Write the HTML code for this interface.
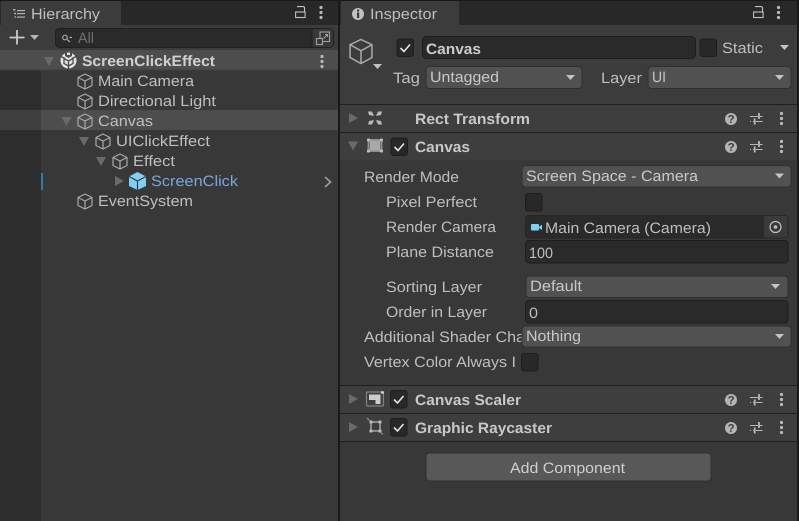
<!DOCTYPE html>
<html><head><meta charset="utf-8"><style>
html,body{margin:0;padding:0;background:#191919;width:799px;height:521px;overflow:hidden}
svg{display:block}
text{font-family:"Liberation Sans",sans-serif;font-size:15px;fill:#bebebe;text-rendering:geometricPrecision}
.b{font-weight:bold;fill:#c8c8c8}
</style></head><body>
<svg width="799" height="521" viewBox="0 0 799 521" xmlns="http://www.w3.org/2000/svg">
<defs>
<g id="cube" fill="none" stroke="#aaaaaa" stroke-width="1.200" stroke-linejoin="round"><path d="M8 1 L15 4.500 V12.500 L8 16 L1 12.500 V4.500 Z M1 4.500 L8 8 L15 4.500 M8 8 V16"/></g>
<g id="kb"><rect x="0" y="0" width="16.500" height="17.500" rx="2.500" fill="#282828" stroke="#1e1e1e"/></g>
<g id="chk"><use href="#kb"/><path d="M3.500 9 L7 12.500 L13 5.500" fill="none" stroke="#e4e4e4" stroke-width="1.600"/></g>
<g id="dots" fill="#b8b8b8"><circle cx="1.500" cy="1.500" r="1.600"/><circle cx="1.500" cy="6.500" r="1.600"/><circle cx="1.500" cy="11.500" r="1.600"/></g>
<g id="lock" fill="none" stroke="#c0c0c0" stroke-width="1.100"><rect x="0.600" y="6" width="9.500" height="5.500"/><path d="M2 0.600 H8 Q9.500 0.600 9.500 2 V6"/></g>
<g id="help"><circle cx="6" cy="6" r="6" fill="#b4b4b4"/><text x="2.600" y="10.200" style="font-size:11.500px;font-weight:bold;fill:#3e3e3e">?</text></g>
<g id="sl" stroke="#b8b8b8" stroke-width="1.100" fill="none"><path d="M0 3.500 H8 M10 3.500 H12.500 M0 8.500 H1 M3 8.500 H4 M6 8.500 H12.500"/><path d="M9 0 V6 M4.700 5.500 V11.500" stroke-width="1.800"/></g>
<g id="tl" fill="#6a6a6a"><path d="M0 0 L9 5 L0 10 Z"/></g>
<g id="td" fill="#6a6a6a"><path d="M0 0 H10 L5 9 Z"/></g>
<g id="dd" fill="#c4c4c4"><path d="M0 0 H9 L4.500 5 Z"/></g>
</defs>

<rect width="799" height="521" fill="#191919"/>
<!-- hierarchy panel -->
<rect x="0" y="1" width="338" height="24" fill="#282828"/>
<path d="M1 25 V3 Q1 1 3 1 H119 Q121 1 121 3 V25 Z" fill="#3c3c3c"/>
<rect x="0" y="25" width="338" height="25" fill="#3c3c3c"/>
<rect x="0" y="50" width="338" height="471" fill="#383838"/>
<rect x="0" y="50" width="41" height="471" fill="#2d2d2d"/>
<rect x="0" y="50" width="338" height="20" fill="#4d4d4d"/>
<rect x="0" y="69.500" width="338" height="1" fill="#3f3f3f"/>
<rect x="0" y="110" width="41" height="20" fill="#3f3f3f"/>
<rect x="41" y="110" width="297" height="20" fill="#4d4d4d"/>
<rect x="41" y="173" width="2" height="17" fill="#2a7fae"/>

<!-- tab icon -->
<g fill="#b4b4b4"><rect x="17" y="10" width="8" height="1.200"/><rect x="17" y="13" width="8" height="1.200"/><rect x="17" y="16.500" width="8" height="1.200"/><rect x="13" y="9" width="2.500" height="1.400"/><rect x="14" y="12.800" width="2" height="1.400"/><rect x="14.500" y="16.300" width="1.500" height="1.300"/></g>
<text x="31" y="19" textLength="69" lengthAdjust="spacingAndGlyphs">Hierarchy</text>
<use href="#lock" x="295" y="6"/>
<use href="#dots" x="319.500" y="6"/>

<!-- toolbar -->
<path d="M17 30 V44.500 M9.500 37.500 H24.500" stroke="#c8c8c8" stroke-width="1.800"/>
<path d="M30 35 H39 L34.500 40 Z" fill="#b4b4b4"/>
<rect x="55.500" y="28.500" width="278" height="19" rx="4" fill="#2a2a2a" stroke="#202020"/>
<rect x="312" y="29" width="21" height="18" rx="3" fill="#383838"/>
<path d="M312 29 V47" stroke="#202020"/>
<circle cx="65" cy="37.500" r="2.300" fill="none" stroke="#a8a8a8" stroke-width="1.200"/><path d="M67 39.500 L70 42 M69.500 37.500 H72" stroke="#a8a8a8" stroke-width="1.200"/>
<text x="78" y="43" textLength="16" lengthAdjust="spacingAndGlyphs" style="fill:#6f6f6f">All</text>
<rect x="320" y="32" width="9.500" height="9.500" fill="none" stroke="#a0a0a0" stroke-width="1.100"/>
<rect x="316.500" y="38.500" width="6" height="6" fill="#383838" stroke="#a0a0a0" stroke-width="1.100"/>
<path d="M323.500 38.500 L327.500 34.500 M325 34.500 H327.500 V37" stroke="#a0a0a0" fill="none"/>

<!-- hierarchy rows -->
<use href="#td" x="44" y="57"/>
<circle cx="68.500" cy="60.500" r="8" fill="#e4e4e4"/>
<path d="M60 56 L65 58.500 M77 56 L72 58.500 M68.500 66 V69" stroke="#4d4d4d" stroke-width="1.500" fill="none"/>
<path d="M64 58.500 L68.500 61 L73 58.500 M68.500 61 V66 M64 58.500 V63.500 L68.500 66 L73 63.500 V58.500" stroke="#4d4d4d" stroke-width="1.300" fill="none"/>
<path d="M65 52 H67 V55 H70 V52 H72 V56 L68.500 58 L65 56 Z" fill="#4d4d4d"/>
<text class="b" x="82" y="66" textLength="133" lengthAdjust="spacingAndGlyphs" style="fill:#d0d0d0">ScreenClickEffect</text>
<use href="#dots" x="320.500" y="55"/>

<use href="#cube" x="77" y="73"/>
<text x="98" y="86" textLength="96" lengthAdjust="spacingAndGlyphs">Main Camera</text>
<use href="#cube" x="77" y="93"/>
<text x="98" y="106" textLength="118" lengthAdjust="spacingAndGlyphs">Directional Light</text>
<use href="#td" x="61.500" y="117"/>
<use href="#cube" x="77" y="113"/>
<text x="98" y="126" textLength="55" lengthAdjust="spacingAndGlyphs">Canvas</text>
<use href="#td" x="79" y="137"/>
<use href="#cube" x="95" y="133"/>
<text x="116" y="146" textLength="94" lengthAdjust="spacingAndGlyphs">UIClickEffect</text>
<use href="#td" x="96" y="157"/>
<use href="#cube" x="112" y="153"/>
<text x="133" y="166" textLength="42" lengthAdjust="spacingAndGlyphs">Effect</text>
<use href="#tl" x="115" y="176"/>
<path d="M137.500 172 L146 176.500 V186 L137.500 190 L129 186 V176.500 Z" fill="#7fd0f5"/>
<path d="M129 176.500 L137.500 181 L146 176.500 M137.500 181 V190" stroke="#383838" stroke-width="1.200" fill="none"/>
<text x="151" y="186" textLength="87" lengthAdjust="spacingAndGlyphs" style="fill:#7ba4dd">ScreenClick</text>
<path d="M325 177 L330.500 182 L325 187" fill="none" stroke="#989898" stroke-width="1.800"/>
<use href="#cube" x="77" y="193"/>
<text x="98" y="206" textLength="95" lengthAdjust="spacingAndGlyphs">EventSystem</text>

<!-- inspector panel -->
<rect x="340" y="1" width="457" height="24" fill="#282828"/>
<path d="M341 25 V3 Q341 1 343 1 H457 Q459 1 459 3 V25 Z" fill="#3c3c3c"/>
<rect x="340" y="25" width="457" height="496" fill="#383838"/>
<rect x="340" y="25" width="457" height="79" fill="#3c3c3c"/>
<circle cx="358" cy="14" r="6" fill="#c0c0c0"/><rect x="357" y="12.500" width="2.200" height="5.500" fill="#3c3c3c"/><rect x="357" y="9.500" width="2.200" height="2" fill="#3c3c3c"/>
<text x="370" y="19" textLength="67" lengthAdjust="spacingAndGlyphs">Inspector</text>
<use href="#lock" x="753" y="6"/>
<use href="#dots" x="777" y="6"/>

<g transform="translate(349,38) scale(1.500)"><path d="M8 1 L15.300 4.500 V13 L8 17 L.7 13 V4.500 Z M.7 4.500 L8 8.500 L15.300 4.500 M8 8.500 V17" fill="none" stroke="#aaaaaa" stroke-width="1"/></g>
<path d="M373 64 H382 L377.500 69 Z" fill="#c4c4c4"/>
<use href="#chk" x="397" y="39"/>
<rect x="422.500" y="36.500" width="273" height="22" rx="4" fill="#2a2a2a" stroke="#1e1e1e"/>
<text class="b" x="426" y="54" textLength="55" lengthAdjust="spacingAndGlyphs" style="fill:#cccccc">Canvas</text>
<use href="#kb" x="700" y="39"/>
<text x="722" y="53" textLength="41" lengthAdjust="spacingAndGlyphs">Static</text>
<path d="M780 45 H789 L784.500 50 Z" fill="#c4c4c4"/>
<text x="393" y="83" textLength="27" lengthAdjust="spacingAndGlyphs">Tag</text>
<rect x="426" y="66.500" width="156" height="22" rx="3.500" fill="#515151" stroke="#303030"/>
<text x="430" y="82" textLength="69" lengthAdjust="spacingAndGlyphs" style="fill:#c8c8c8">Untagged</text>
<use href="#dd" x="566" y="75"/>
<text x="601" y="83" textLength="41" lengthAdjust="spacingAndGlyphs">Layer</text>
<rect x="648" y="66.500" width="143" height="22" rx="3.500" fill="#515151" stroke="#303030"/>
<text x="652" y="82" textLength="14" lengthAdjust="spacingAndGlyphs" style="fill:#c8c8c8">UI</text>
<use href="#dd" x="775" y="75"/>

<!-- Component headers -->
<rect x="340" y="105" width="457" height="27" fill="#3e3e3e"/>
<rect x="340" y="133" width="457" height="27" fill="#3e3e3e"/>
<rect x="340" y="386" width="457" height="27" fill="#3e3e3e"/>
<rect x="340" y="414" width="457" height="27" fill="#3e3e3e"/>
<g fill="#1f1f1f"><rect x="340" y="104" width="457" height="1"/><rect x="340" y="132" width="457" height="1"/><rect x="340" y="385" width="457" height="1"/><rect x="340" y="413" width="457" height="1"/><rect x="340" y="441" width="457" height="1"/></g>

<use href="#tl" x="349" y="113"/>
<g fill="#b8b8b8"><path d="M368 111.500 L372 111.500 L374 116 L369 115 Z M382 111.500 L378 111.500 L376 116 L381 115 Z M368 124.500 L372 124.500 L374 120 L369 121 Z M382 124.500 L378 124.500 L376 120 L381 121 Z"/></g>
<text class="b" x="415" y="124" textLength="115" lengthAdjust="spacingAndGlyphs">Rect Transform</text>
<use href="#help" x="725" y="113"/><use href="#sl" x="750" y="113"/><use href="#dots" x="780" y="112"/>

<use href="#td" x="348" y="141.500"/>
<rect x="369" y="140" width="12" height="11" fill="#a8a8a8" stroke="#3e3e3e" stroke-width="1"/>
<rect x="368.200" y="139.800" width="13.600" height="11.400" fill="none" stroke="#b4b4b4" stroke-width="1"/>
<g fill="#bdbdbd"><rect x="367" y="138.500" width="3" height="3" rx=".8"/><rect x="380" y="138.500" width="3" height="3" rx=".8"/><rect x="367" y="149.500" width="3" height="3" rx=".8"/><rect x="380" y="149.500" width="3" height="3" rx=".8"/></g>
<use href="#chk" x="391" y="138"/>
<text class="b" x="415" y="152" textLength="55" lengthAdjust="spacingAndGlyphs">Canvas</text>
<use href="#help" x="725" y="141"/><use href="#sl" x="750" y="141"/><use href="#dots" x="780" y="140"/>

<!-- Canvas body -->
<text x="364" y="182" textLength="95" lengthAdjust="spacingAndGlyphs">Render Mode</text>
<rect x="522" y="165.500" width="269" height="21.500" rx="3.500" fill="#515151" stroke="#303030"/>
<text x="526" y="181" textLength="172" lengthAdjust="spacingAndGlyphs" style="fill:#c8c8c8">Screen Space - Camera</text>
<use href="#dd" x="775" y="173.500"/>

<text x="386" y="207" textLength="91" lengthAdjust="spacingAndGlyphs">Pixel Perfect</text>
<use href="#kb" x="525.500" y="193.500"/>

<text x="386" y="232" textLength="110" lengthAdjust="spacingAndGlyphs">Render Camera</text>
<rect x="525.500" y="215.500" width="262.500" height="22.500" rx="3.500" fill="#2a2a2a" stroke="#252525"/>
<path d="M764 216 H785 Q787.500 216 787.500 218.500 V235 Q787.500 237.500 785 237.500 H764 Z" fill="#3a3a3a"/>
<circle cx="775.500" cy="227" r="5.500" fill="none" stroke="#c0c0c0" stroke-width="1.200"/><circle cx="775.500" cy="227" r="1.800" fill="#c0c0c0"/>
<rect x="531" y="224" width="8" height="6.500" rx="1" fill="#7fd0f5"/><path d="M539 227 L542 224.500 V230 L539 228 Z" fill="#7fd0f5"/>
<text x="545" y="233" textLength="166" lengthAdjust="spacingAndGlyphs">Main Camera (Camera)</text>

<text x="386" y="257" textLength="108" lengthAdjust="spacingAndGlyphs">Plane Distance</text>
<rect x="525.500" y="240.500" width="262.500" height="22.500" rx="3.500" fill="#2a2a2a" stroke="#1e1e1e"/>
<text x="529" y="258" textLength="24" lengthAdjust="spacingAndGlyphs">100</text>

<text x="386" y="292" textLength="96" lengthAdjust="spacingAndGlyphs">Sorting Layer</text>
<rect x="526" y="276" width="262" height="21.500" rx="3.500" fill="#515151" stroke="#303030"/>
<text x="530" y="291" textLength="52" lengthAdjust="spacingAndGlyphs" style="fill:#c8c8c8">Default</text>
<use href="#dd" x="771" y="284"/>

<text x="386" y="317" textLength="101" lengthAdjust="spacingAndGlyphs">Order in Layer</text>
<rect x="525.500" y="300.500" width="262.500" height="22.500" rx="3.500" fill="#2a2a2a" stroke="#1e1e1e"/>
<text x="529" y="318" textLength="9" lengthAdjust="spacingAndGlyphs">0</text>

<svg x="364" y="325" width="158" height="25"><text x="0" y="17" textLength="161" lengthAdjust="spacingAndGlyphs">Additional Shader Cha</text></svg>
<rect x="522" y="326" width="269" height="21" rx="3.500" fill="#515151" stroke="#303030"/>
<text x="526" y="341" textLength="55" lengthAdjust="spacingAndGlyphs" style="fill:#c8c8c8">Nothing</text>
<use href="#dd" x="775" y="334"/>

<text x="364" y="367" textLength="152" lengthAdjust="spacingAndGlyphs">Vertex Color Always I</text>
<use href="#kb" x="521.500" y="353.500"/>

<!-- Canvas scaler -->
<use href="#tl" x="349" y="394"/>
<rect x="366.500" y="392" width="17" height="14" rx="1" fill="none" stroke="#808080" stroke-width="1.200"/>
<path d="M369 394.500 H380.500 V404 H375.500 V400 H369 Z" fill="#cccccc"/>
<circle cx="382.500" cy="392.500" r="1.500" fill="#cccccc"/>
<use href="#chk" x="390.500" y="390.500"/>
<text class="b" x="415" y="405" textLength="106" lengthAdjust="spacingAndGlyphs">Canvas Scaler</text>
<use href="#help" x="725" y="394"/><use href="#sl" x="750" y="394"/><use href="#dots" x="780" y="393"/>

<!-- Graphic raycaster -->
<use href="#tl" x="349" y="422"/>
<path d="M367 418 L383 434.500" stroke="#5f9eb0" stroke-width="1.200"/>
<rect x="371" y="422" width="9" height="9" fill="#3e3e3e" stroke="#bdbdbd" stroke-width="1.200"/>
<g fill="#bdbdbd"><rect x="369.500" y="420.500" width="3" height="3" rx=".8"/><rect x="378.500" y="420.500" width="3" height="3" rx=".8"/><rect x="369.500" y="429.500" width="3" height="3" rx=".8"/><rect x="378.500" y="429.500" width="3" height="3" rx=".8"/></g>
<use href="#chk" x="390.500" y="418.500"/>
<text class="b" x="415" y="433" textLength="137" lengthAdjust="spacingAndGlyphs">Graphic Raycaster</text>
<use href="#help" x="725" y="422"/><use href="#sl" x="750" y="422"/><use href="#dots" x="780" y="421"/>

<!-- Add component -->
<rect x="426" y="453" width="285" height="28" rx="3.500" fill="#585858" stroke="#303030"/>
<text x="510" y="473" textLength="115" lengthAdjust="spacingAndGlyphs" style="fill:#cecece">Add Component</text>
</svg>
</body></html>
